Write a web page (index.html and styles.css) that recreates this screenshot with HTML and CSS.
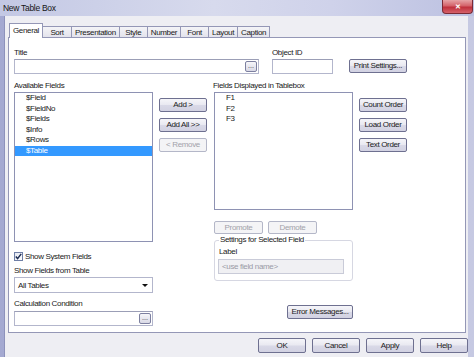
FILE: index.html
```html
<!DOCTYPE html>
<html lang="en">

<head>
    <meta http-equiv="Content-Type" content="text/html; charset=UTF-8" />
    <title>New Table Box</title>
    <link rel="stylesheet" href="styles.css">
</head>

<body>
    <div class="window">
        <div class="titlebar">
            <span class="titleText">New Table Box</span>
            <div class="closeButton">&#x2715;</div>
        </div>

        <div class="client">
            <div class="tabs">
                <div class="tab selected">General</div>
                <div class="tab">Sort</div>
                <div class="tab">Presentation</div>
                <div class="tab">Style</div>
                <div class="tab">Number</div>
                <div class="tab">Font</div>
                <div class="tab">Layout</div>
                <div class="tab">Caption</div>
            </div>

            <div class="panel">
                <!-- top row: title, object id, print settings -->
                <div class="topRow">
                    <div class="field titleField">
                        <label>Title</label>
                        <div class="textInput">
                            <span class="dotsButton">...</span>
                        </div>
                    </div>
                    <div class="field objectIdField">
                        <label>Object ID</label>
                        <div class="textInput"></div>
                    </div>
                    <button class="btn printButton">Print Settings...</button>
                </div>

                <div class="mainGrid">
                    <div class="column">
                        <label>Available Fields</label>
                        <div class="listBox availableList">
                            <div class="listItem">$Field</div>
                            <div class="listItem">$FieldNo</div>
                            <div class="listItem">$Fields</div>
                            <div class="listItem">$Info</div>
                            <div class="listItem">$Rows</div>
                            <div class="listItem active">$Table</div>
                        </div>
                        <div class="checkRow">
                            <span class="checkBox">
                                <svg width="7" height="7" viewBox="0 0 7 7">
                                    <path d="M0.8 3.6 L2.6 5.6 L6.2 0.9" fill="none" stroke="#1c2c52" stroke-width="1.5" />
                                </svg>
                            </span>
                            Show System Fields
                        </div>
                        <label class="spaced">Show Fields from Table</label>
                        <div class="comboBox">
                            <span>All Tables</span>
                            <span class="comboArrow"></span>
                        </div>
                        <label class="conditionLabel">Calculation Condition</label>
                        <div class="textInput conditionInput">
                            <span class="dotsButton">...</span>
                        </div>
                    </div>

                    <div class="column buttonColumn">
                        <button class="btn">Add &gt;</button>
                        <button class="btn">Add All &gt;&gt;</button>
                        <button class="btn disabled removeButton">&lt; Remove</button>
                    </div>

                    <div class="column">
                        <label>Fields Displayed in Tablebox</label>
                        <div class="listBox displayedList">
                            <div class="listItem">F1</div>
                            <div class="listItem">F2</div>
                            <div class="listItem">F3</div>
                        </div>
                        <div class="promoteRow">
                            <button class="btn disabled">Promote</button>
                            <button class="btn disabled">Demote</button>
                        </div>
                        <fieldset class="groupBox">
                            <legend>Settings for Selected Field</legend>
                            <label>Label</label>
                            <div class="textInput disabledInput">&lt;use field name&gt;</div>
                        </fieldset>
                        <button class="btn errorButton">Error Messages...</button>
                    </div>

                    <div class="column buttonColumn">
                        <button class="btn">Count Order</button>
                        <button class="btn">Load Order</button>
                        <button class="btn textOrder">Text Order</button>
                    </div>
                </div>
            </div>

            <div class="footer">
                <button class="btn footerButton">OK</button>
                <button class="btn footerButton">Cancel</button>
                <button class="btn footerButton">Apply</button>
                <button class="btn footerButton">Help</button>
            </div>
        </div>
    </div>
</body>

</html>
```

FILE: styles.css
```css
html, body {
    margin: 0;
    padding: 0;
}
body {
    width: 474px;
    height: 357px;
    overflow: hidden;
    font-family: "Liberation Sans", Arial, sans-serif;
    font-size: 8px;
    letter-spacing: -0.35px; /* the dialog font is narrow */
    color: #1a1a1a;
}
button {
    font: inherit;
    letter-spacing: inherit;
}

.window {
    width: 474px;
    height: 357px;
    display: flex;
    flex-direction: column;
    background: linear-gradient(90deg, #a4a9d1 0%, #bfc3e0 60%, #c6c9e2 100%);
}

/* title bar */
.titlebar {
    height: 16px;
    display: flex;
    align-items: flex-start;
    background: linear-gradient(90deg, #c3c8e4 0%, #d7daed 45%, #cfd2ea 70%, #bcc1e1 100%);
}
.titleText {
    padding: 3px 0 0 3px;
    font-size: 8.5px;
    letter-spacing: -0.3px;
    color: #151515;
}
.closeButton {
    margin-left: auto;
    margin-right: 1px;
    width: 31px;
    height: 14px;
    box-sizing: border-box;
    border: 1px solid #7a2a35;
    border-top: none;
    border-radius: 0 0 4px 4px;
    background: linear-gradient(180deg, #e6a3a6 0%, #d4626a 45%, #c0303c 55%, #d5616a 100%);
    color: #ffffff;
    font-size: 7px;
    font-weight: bold;
    letter-spacing: 0;
    text-align: center;
    line-height: 13px;
}

/* dialog client area */
.client {
    flex: 1;
    margin: 0 6px 0 4px;
    padding: 7px 0 0 3px;
    background: #eeeef3;
    border-left: 1px solid #8d92bb;
    display: flex;
    flex-direction: column;
}

.tabs {
    display: flex;
    align-items: flex-end;
    height: 14px;
    margin-left: 1px;
    position: relative;
    z-index: 1;
}
.tab {
    min-width: 28px;
    height: 11px;
    line-height: 11px;
    padding: 0 3px;
    box-sizing: border-box;
    text-align: center;
    border: 1px solid #9497b6;
    border-bottom: none;
    border-right: none;
    background: linear-gradient(180deg, #f4f4f7 0%, #e3e3ec 100%);
}
.tab:last-child {
    border-right: 1px solid #9497b6;
}
.tab.selected {
    height: 15px;
    line-height: 13px;
    padding: 0 3px;
    margin-bottom: -1px;
    background: #ffffff;
    border-right: 1px solid #9497b6;
}
.tab.selected + .tab {
    border-left: none;
}

.panel {
    width: 458px;
    height: 296px;
    box-sizing: border-box;
    border: 1px solid #9497b6;
    background: #ffffff;
    padding: 9px 0 0 5px;
}

label {
    display: block;
    height: 12px;
    line-height: 12px;
}

/* top row */
.topRow {
    display: flex;
    align-items: flex-end;
}
.titleField {
    width: 245px;
}
.objectIdField {
    width: 61px;
    margin-left: 13px;
}
.printButton {
    width: 58px;
    margin-left: 16px;
    margin-bottom: 1px;
}

.textInput {
    height: 15px;
    box-sizing: border-box;
    border: 1px solid #b3b6cc;
    border-top-color: #9b9eb6;
    background: #ffffff;
    display: flex;
    align-items: center;
    justify-content: flex-end;
    padding: 0 1px;
}
.dotsButton {
    width: 12px;
    height: 11px;
    box-sizing: border-box;
    border: 1px solid #7d80a0;
    border-radius: 2px;
    background: linear-gradient(180deg, #f6f6f9 0%, #d9d9e6 100%);
    font-size: 7px;
    letter-spacing: 0;
    line-height: 8px;
    text-align: center;
    color: #333333;
}

/* buttons */
.btn {
    display: block;
    height: 14px;
    box-sizing: border-box;
    padding: 0;
    border: 1px solid #6e7090;
    border-radius: 2px;
    background: linear-gradient(180deg, #f5f5f9 0%, #e9e9f1 48%, #d9d9e7 52%, #d2d2e2 100%);
    color: #1a1a1a;
    line-height: 12px;
    text-align: center;
    white-space: nowrap;
}
.btn.disabled {
    border-color: #b4b7c8;
    background: #f4f4f6;
    color: #a2a2aa;
}

/* main grid */
.mainGrid {
    display: grid;
    grid-template-columns: 139px 48px 140px 48px;
    column-gap: 6px;
    margin-top: 6px;
}
.column {
    display: flex;
    flex-direction: column;
}
.buttonColumn {
    padding-top: 18px;
}
.buttonColumn .btn + .btn {
    margin-top: 6px;
}
.buttonColumn .removeButton {
    margin-top: 11px;
}
.buttonColumn .textOrder {
    margin-top: 7px;
}

.listBox {
    box-sizing: border-box;
    border: 1px solid #8e92b3;
    background: #ffffff;
}
.availableList {
    height: 150px;
}
.displayedList {
    height: 118px;
    margin-left: 1px;
}
.listItem {
    height: 10.5px;
    line-height: 10.5px;
    padding-left: 11px;
}
.listItem.active {
    background: #3399ff;
    color: #ffffff;
}

.checkRow {
    display: flex;
    align-items: center;
    height: 12px;
    margin-top: 8px;
}
.checkBox {
    width: 9px;
    height: 9px;
    box-sizing: border-box;
    border: 1px solid #6f7fa6;
    background: linear-gradient(135deg, #e4e8f2 0%, #ffffff 100%);
    display: flex;
    align-items: center;
    justify-content: center;
    margin-right: 2px;
}
.spaced {
    margin-top: 3px;
}
.comboBox {
    height: 16px;
    box-sizing: border-box;
    border: 1px solid #b3b6cc;
    background: #ffffff;
    display: flex;
    align-items: center;
    padding: 0 4px 0 3px;
}
.comboArrow {
    margin-left: auto;
    width: 0;
    height: 0;
    border-left: 3px solid transparent;
    border-right: 3px solid transparent;
    border-top: 3px solid #111111;
}
.conditionLabel {
    margin-top: 5px;
}
.conditionInput {
    margin-top: 1px;
}

/* right side below the displayed list */
.promoteRow {
    display: flex;
    margin-top: 11px;
    margin-left: 1px;
}
.promoteRow .btn {
    width: 49px;
    height: 13px;
}
.promoteRow .btn + .btn {
    margin-left: 5px;
}
.groupBox {
    margin: 0 0 0 1px;
    padding: 0 8px 6px 3px;
    border: 1px solid #d6d7e2;
    border-radius: 3px;
}
.groupBox legend {
    padding: 0 1px;
    margin-left: 1px;
    height: 12px;
    line-height: 12px;
}
.groupBox label {
    padding-left: 1px;
}
.disabledInput {
    margin-top: 1px;
    justify-content: flex-start;
    padding-left: 3px;
    background: #f0f0f3;
    border-color: #c9cbd8;
    color: #9a9aa6;
}
.errorButton {
    width: 66px;
    margin: 24px 0 0 auto;
}

/* bottom buttons */
.footer {
    display: flex;
    justify-content: flex-end;
    margin-top: 5px;
}
.footerButton {
    width: 48px;
    height: 15px;
    line-height: 13px;
}
.footer .btn + .btn {
    margin-left: 6px;
}
```
